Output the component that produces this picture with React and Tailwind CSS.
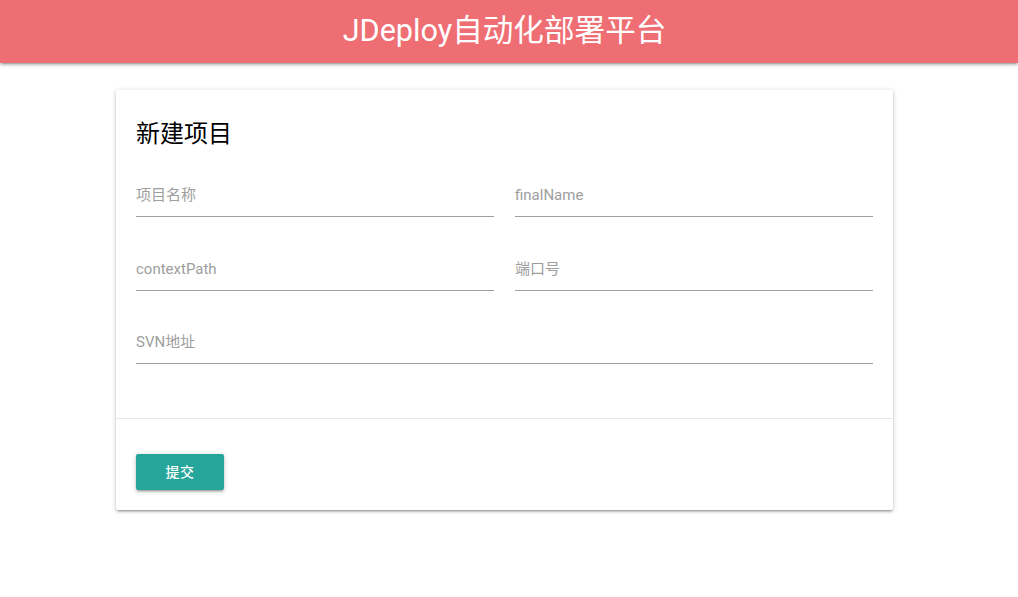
import React from "react";

const font = { fontFamily: 'Roboto, "Noto Sans CJK SC", sans-serif' };

function Field({ label, className = "" }) {
  return (
    <div className={`h-[45px] pt-[2px] border-b border-[#9e9e9e] flex items-center ${className}`}>
      <span className="text-[15px] text-[#9e9e9e] leading-none">{label}</span>
    </div>
  );
}

export default function App() {
  return (
    <div className="min-h-[597px] bg-white" style={font}>
      <header className="h-[63px] bg-[#ee6e73] shadow-[0_2px_2px_0_rgba(0,0,0,0.14),0_3px_1px_-2px_rgba(0,0,0,0.12),0_1px_5px_0_rgba(0,0,0,0.2)]">
        <div className="w-[1009px] h-full flex items-center justify-center">
          <h1 className="text-white text-[30.6px] leading-none">JDeploy自动化部署平台</h1>
        </div>
      </header>
      <main className="w-[1009px] pt-[27px] flex justify-center">
        <div className="w-[777px] bg-white rounded-[2px] shadow-[0_2px_2px_0_rgba(0,0,0,0.14),0_3px_1px_-2px_rgba(0,0,0,0.12),0_1px_5px_0_rgba(0,0,0,0.2)]">
          <div className="px-[20px] pt-[28px] pb-[54px]">
            <h2 className="text-[24px] leading-[32px] text-black">新建项目</h2>
            <div className="mt-[22px] grid grid-cols-2 gap-x-[21px] gap-y-[29px]">
              <Field label="项目名称" />
              <Field label="finalName" />
              <Field label="contextPath" />
              <Field label="端口号" />
              <Field label="SVN地址" className="col-span-2 -mt-[1px]" />
            </div>
          </div>
          <div className="border-t border-[#e8e8e8] px-[20px] pt-[35px] pb-[20px]">
            <button className="w-[88px] h-[36px] rounded-[2px] bg-[#26a69a] text-white text-[14px] font-medium tracking-[0.5px] shadow-[0_2px_2px_0_rgba(0,0,0,0.14),0_3px_1px_-2px_rgba(0,0,0,0.12),0_1px_5px_0_rgba(0,0,0,0.2)]">
              提交
            </button>
          </div>
        </div>
      </main>
    </div>
  );
}
